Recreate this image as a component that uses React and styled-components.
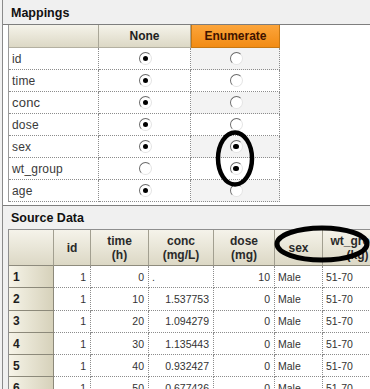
import React from 'react';
import styled, { createGlobalStyle, css } from 'styled-components';

const Global = createGlobalStyle`
  html, body { margin: 0; padding: 0; overflow: hidden; background: #f2f2f2; }
  body { font-family: "Liberation Sans", Arial, sans-serif; }
`;

const Root = styled.div`
  position: relative;
  width: 370px;
  height: 389px;
  overflow: hidden;
`;

const Page = styled.div`
  width: 368px;
  height: 389px;
  margin-left: 2px;
  box-sizing: border-box;
  border-left: 1px solid #8a8a8a;
  background: #f0f0f0;
  display: flex;
  flex-direction: column;
  overflow: hidden;
  & > * { flex-shrink: 0; }
`;

const SectionTitle = styled.div`
  height: ${p => p.$h}px;
  box-sizing: border-box;
  padding: ${p => p.$pt}px 0 0 8px;
  display: flex;
  align-items: center;
  font-weight: bold;
  font-size: 12.5px;
  color: #111;
  background: #f0f0f0;
  ${p => p.$bottom && css`border-bottom: 1px solid #7e7e7e;`}
  ${p => p.$top && css`border-top: 1px solid #7e7e7e;`}
`;

const MappingsBody = styled.div`
  height: 180px;
  background: #fff;
  padding-left: 5px;
  box-sizing: border-box;
`;

const MapTable = styled.div`
  display: grid;
  grid-template-columns: 90px 92px 89px;
  width: max-content;
  border-left: 1px solid #9a9a9a;
`;

const MapHead = styled.div`
  height: 23px;
  box-sizing: border-box;
  display: flex;
  align-items: center;
  justify-content: center;
  font-weight: bold;
  font-size: 12px;
  ${p => p.$active
    ? css`
      background: linear-gradient(#fca53b, #f28b14);
      color: #3f1300;
      border: 1px solid #c77814;
      border-top: none;
    `
    : css`
      background: linear-gradient(#f5f3ea, #dcd8c5);
      color: #1e1e1e;
      border-right: 1px solid #a9a697;
      border-bottom: 1px solid #b3b0a1;
    `}
`;

const MapCell = styled.div`
  height: 22px;
  box-sizing: border-box;
  display: flex;
  align-items: center;
  justify-content: ${p => (p.$label ? 'flex-start' : 'center')};
  padding-left: ${p => (p.$label ? '3px' : '0')};
  font-size: ${p => p.$size || 12}px;
  color: #3a3a3a;
  letter-spacing: 0.2px;
  border-right: 1px dotted #8c8c8c;
  border-bottom: 1px dotted #8c8c8c;
  background: ${p => (p.$shade ? '#f3f3f3' : '#fff')};
`;

const Radio = styled.span`
  position: relative;
  display: inline-block;
  width: 13px;
  height: 13px;
  margin-left: 2px;
  box-sizing: border-box;
  border-radius: 50%;
  border: 1.5px solid;
  border-color: #6a6a6a #e4e4e4 #e4e4e4 #6a6a6a;
  background: #fff;
  ${p => p.$checked && css`
    &::after {
      content: '';
      position: absolute;
      left: 2.5px;
      top: 2.5px;
      width: 5.5px;
      height: 5.5px;
      border-radius: 50%;
      background: #000;
    }
  `}
`;

const DataTable = styled.div`
  display: flex;
  flex-direction: column;
  margin-left: 5px;
  border-top: 1px solid #8e8e8e;
  border-left: 1px solid #8e8e8e;
  background: #fff;
  width: max-content;
`;

const DataRow = styled.div`
  display: flex;
`;

const HeadCell = styled.div`
  width: ${p => p.$w}px;
  height: 36px;
  box-sizing: border-box;
  flex-shrink: 0;
  display: flex;
  flex-direction: column;
  align-items: center;
  justify-content: center;
  font-weight: bold;
  font-size: 12px;
  line-height: 14px;
  color: #2a2a2a;
  white-space: nowrap;
  overflow: hidden;
  background: linear-gradient(#f5f3ea, #dcd8c5);
  border-right: 1px solid #a29f90;
  border-bottom: 1px solid #8e8b7d;
`;

const RowHead = styled.div`
  width: 45px;
  height: 22.3px;
  box-sizing: border-box;
  flex-shrink: 0;
  display: flex;
  align-items: center;
  padding-left: 4px;
  font-weight: bold;
  font-size: 12px;
  color: #1e1e1e;
  background: linear-gradient(90deg, #f6f4e8, #d6d1ba);
  border-right: 1px solid #8c897a;
  border-bottom: 1px solid #8c897a;
`;

const Cell = styled.div`
  width: ${p => p.$w}px;
  height: 22.3px;
  box-sizing: border-box;
  flex-shrink: 0;
  display: flex;
  align-items: center;
  justify-content: ${p => (p.$left ? 'flex-start' : 'flex-end')};
  padding: 0 4px 0 3px;
  font-size: 10.5px;
  color: #333;
  border-right: 1px dotted #8c8c8c;
  border-bottom: 1px dotted #8c8c8c;
  white-space: nowrap;
`;

const Overlay = styled.svg`
  position: absolute;
  left: 0;
  top: 0;
  pointer-events: none;
`;

const mappings = [
  { name: 'id', none: true, enumerate: false },
  { name: 'time', none: true, enumerate: false },
  { name: 'conc', none: true, enumerate: false, size: 13 },
  { name: 'dose', none: true, enumerate: false },
  { name: 'sex', none: true, enumerate: true },
  { name: 'wt_group', none: false, enumerate: true },
  { name: 'age', none: true, enumerate: false },
];

const columns = [
  { key: 'id', w: 37, label: ['id'] },
  { key: 'time', w: 58, label: ['time', '(h)'] },
  { key: 'conc', w: 65, label: ['conc', '(mg/L)'] },
  { key: 'dose', w: 61, label: ['dose', '(mg)'] },
  { key: 'sex', w: 48, label: ['sex'], left: true },
  { key: 'wt', w: 70, label: ['wt_group', '(kg)'], left: true },
];

const rows = [
  { id: '1', time: '0', conc: '.', dose: '10', sex: 'Male', wt: '51-70', concLeft: true },
  { id: '1', time: '10', conc: '1.537753', dose: '0', sex: 'Male', wt: '51-70' },
  { id: '1', time: '20', conc: '1.094279', dose: '0', sex: 'Male', wt: '51-70' },
  { id: '1', time: '30', conc: '1.135443', dose: '0', sex: 'Male', wt: '51-70' },
  { id: '1', time: '40', conc: '0.932427', dose: '0', sex: 'Male', wt: '51-70' },
  { id: '1', time: '50', conc: '0.677426', dose: '0', sex: 'Male', wt: '51-70' },
];

export default function App() {
  return (
    <Root>
      <Global />
      <Page>
        <SectionTitle $h={25} $pt={2} $bottom>Mappings</SectionTitle>
        <MappingsBody>
          <MapTable>
            <MapHead />
            <MapHead>None</MapHead>
            <MapHead $active>Enumerate</MapHead>
            {mappings.map((m, i) => (
              <React.Fragment key={m.name}>
                <MapCell $label $size={m.size}>{m.name}</MapCell>
                <MapCell><Radio $checked={m.none} /></MapCell>
                <MapCell $shade={i % 2 === 0}><Radio $checked={m.enumerate} /></MapCell>
              </React.Fragment>
            ))}
          </MapTable>
        </MappingsBody>
        <SectionTitle $h={24} $pt={0} $top>Source Data</SectionTitle>
        <DataTable>
          <DataRow>
            <HeadCell $w={45} />
            {columns.map(c => (
              <HeadCell key={c.key} $w={c.w}>
                {c.label.map(l => <span key={l}>{l}</span>)}
              </HeadCell>
            ))}
          </DataRow>
          {rows.map((r, i) => (
            <DataRow key={i}>
              <RowHead>{i + 1}</RowHead>
              {columns.map(c => (
                <Cell
                  key={c.key}
                  $w={c.w}
                  $left={c.left || (c.key === 'conc' && r.concLeft)}
                >
                  {r[c.key]}
                </Cell>
              ))}
            </DataRow>
          ))}
        </DataTable>
      </Page>
      <Overlay width="370" height="389" viewBox="0 0 370 389">
        <ellipse cx="235" cy="158.5" rx="17" ry="26" fill="none" stroke="#000" strokeWidth="4.5" />
        <ellipse cx="322" cy="244" rx="45" ry="16" fill="none" stroke="#000" strokeWidth="5" />
      </Overlay>
    </Root>
  );
}
